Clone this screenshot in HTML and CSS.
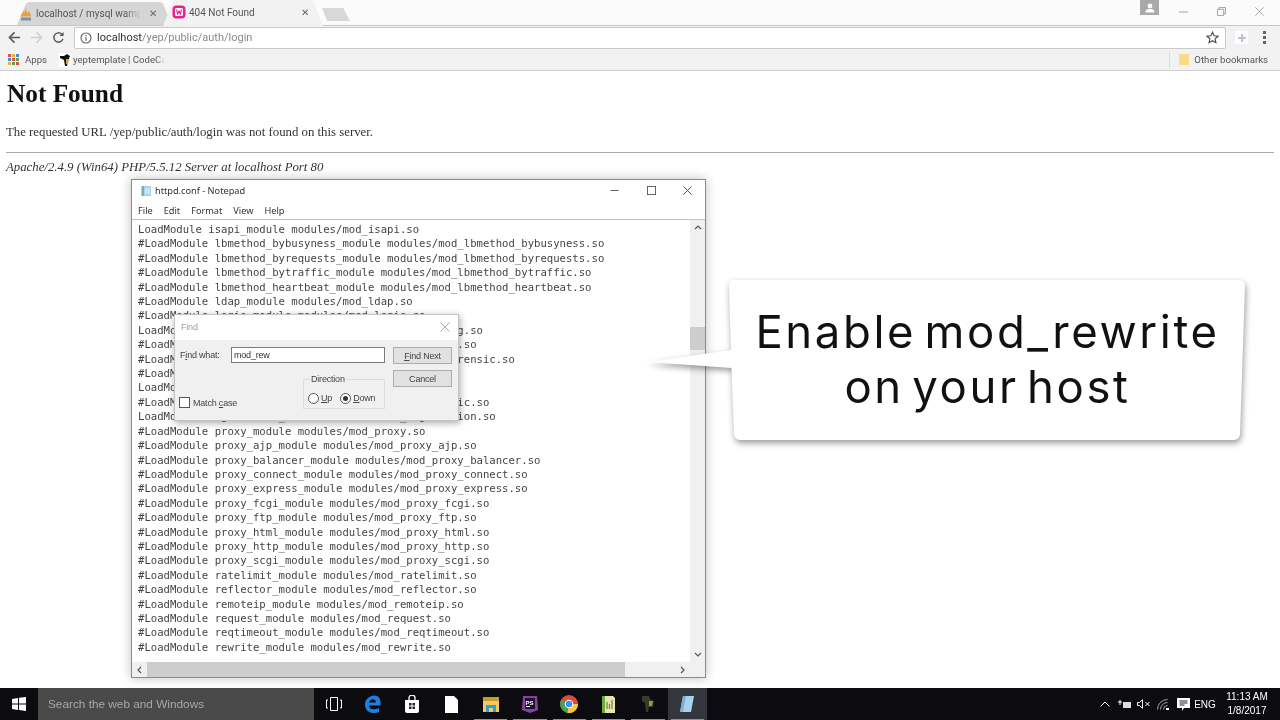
FILE: index.html
```html
<!DOCTYPE html>
<html lang="en">
<head>
<meta charset="utf-8">
<title>404 Not Found</title>
<link rel="stylesheet" href="styles.css">
</head>
<body>
<header class="chrome">
  <div class="tabstrip">
    <div class="tab tab-inactive">
      <svg class="fav" viewBox="0 0 14 14"><path d="M1 9 4 3l1 3 2-5 1 5 2-2 2 5z" fill="#e8a33c"/><path d="M1 9h11" stroke="#e8a33c"/><rect x="2" y="10.500" width="10" height="3" fill="#7c8fb5"/></svg>
      <span class="tab-title fade">localhost / mysql wamps</span>
      <span class="tab-x">✕</span>
    </div>
    <div class="tab tab-active">
      <svg class="fav" viewBox="0 0 14 14"><rect x=".5" y=".5" width="13" height="13" rx="4" fill="#e6228c"/><rect x="3" y="3" width="8" height="8" rx="1.5" fill="#fff"/><path d="M4.500 4.500 5.600 9 7 6l1.400 3 1.100-4.500" fill="none" stroke="#e6228c" stroke-width="1.100"/></svg>
      <span class="tab-title">404 Not Found</span>
      <span class="tab-x">✕</span>
    </div>
    <div class="tab-new"></div>
    <div class="winctl">
      <span class="profile"><svg viewBox="0 0 12 10" width="12" height="10"><circle cx="6" cy="3" r="2.400" fill="#fff"/><path d="M1.500 9.500c0-3 2-3.500 4.500-3.500s4.500.5 4.500 3.500z" fill="#fff"/></svg></span>
      <svg class="ctl ctl-min" viewBox="0 0 10 10"><path d="M0 5.500h10" stroke="#9a9a9a"/></svg>
      <svg class="ctl ctl-max" viewBox="0 0 10 10"><path d="M.5 2.500h7v7h-7zM2.500 2.500v-2h7v7h-2" fill="none" stroke="#9a9a9a"/></svg>
      <svg class="ctl ctl-close" viewBox="0 0 10 10"><path d="M.5.500l9 9M9.500.500l-9 9" stroke="#9a9a9a"/></svg>
    </div>
  </div>
  <div class="toolbar">
    <svg class="nav" viewBox="0 0 14 14"><path d="M13 7H2M7 1.500 1.500 7 7 12.500" fill="none" stroke="#5a5a5a" stroke-width="1.700"/></svg>
    <svg class="nav" viewBox="0 0 14 14"><path d="M1 7h11M7 1.500 12.500 7 7 12.500" fill="none" stroke="#cfcfcf" stroke-width="1.700"/></svg>
    <svg class="nav" viewBox="0 0 14 14"><path d="M11.800 8.500A5 5 0 1 1 10.500 3.400" fill="none" stroke="#5a5a5a" stroke-width="1.600"/><path d="M12.500 1v4.500H8z" fill="#5a5a5a"/></svg>
    <div class="omnibox">
      <svg class="info" viewBox="0 0 12 12"><circle cx="6" cy="6" r="5" fill="none" stroke="#5a5a5a" stroke-width="1.100"/><path d="M6 5.200v3.600M6 3v1.200" stroke="#5a5a5a" stroke-width="1.200"/></svg>
      <span class="url"><span class="host">localhost</span>/yep/public/auth/login</span>
      <svg class="star" viewBox="0 0 14 14"><path d="M7 1.300 8.700 5.200l4.300.4-3.200 2.800.9 4.200L7 10.400l-3.700 2.200.9-4.200L1 5.600l4.300-.4z" fill="none" stroke="#4a4a4a" stroke-width="1.200"/></svg>
    </div>
    <span class="ext"><svg viewBox="0 0 8 8" width="8" height="8"><path d="M4 0v8M0 4h8" stroke="#b9c4d2" stroke-width="2"/></svg></span>
    <span class="menu-dots"><i></i><i></i><i></i></span>
  </div>
  <div class="bookmarks">
    <svg class="apps" viewBox="0 0 11 11">
      <rect width="3" height="3" fill="#d9534a"/><rect x="4" width="3" height="3" fill="#e8b23a"/><rect x="8" width="3" height="3" fill="#4a86d8"/>
      <rect y="4" width="3" height="3" fill="#4a86d8"/><rect x="4" y="4" width="3" height="3" fill="#d9534a"/><rect x="8" y="4" width="3" height="3" fill="#58a55c"/>
      <rect y="8" width="3" height="3" fill="#e8b23a"/><rect x="4" y="8" width="3" height="3" fill="#58a55c"/><rect x="8" y="8" width="3" height="3" fill="#d9534a"/>
    </svg>
    <span class="bm-label">Apps</span>
    <svg class="bm-fav" viewBox="0 0 12 14"><path d="M0 0h12v14H0z" fill="#fff"/><path d="M1 3h4l3-2 3 2-2 5-1 5H6L5 7 1 5z" fill="#111"/><path d="M7 6h3l-1 5H7z" fill="#d9a441"/></svg>
    <span class="bm-label bm-fade">yeptemplate | CodeCa</span>
    <span class="bm-other">
      <svg class="folder" viewBox="0 0 10 11"><path d="M0 0h10v11H0z" fill="#fbdc83"/></svg>
      <span class="bm-label">Other bookmarks</span>
    </span>
  </div>
</header>

<main class="page">
  <h1>Not Found</h1>
  <p>The requested URL /yep/public/auth/login was not found on this server.</p>
  <hr>
  <address>Apache/2.4.9 (Win64) PHP/5.5.12 Server at localhost Port 80</address>
</main>

<section class="notepad">
  <div class="np-title">
    <svg class="np-icon" viewBox="0 0 12 12"><path d="M2 1h9v10H1V2z" fill="#a9d3ea"/><path d="M2 1h2v10H2z" fill="#7fa9bd"/><path d="M5 4h5M5 6h5M5 8h5" stroke="#e9f4fa"/></svg>
    <span>httpd.conf - Notepad</span>
    <span class="np-ctls">
      <svg class="np-ctl" viewBox="0 0 10 10"><path d="M.5 5h9" stroke="#555"/></svg>
      <svg class="np-ctl" viewBox="0 0 10 10"><rect x=".5" y=".5" width="9" height="9" fill="none" stroke="#555"/></svg>
      <svg class="np-ctl" viewBox="0 0 10 10"><path d="M.5.500l9 9M9.500.500l-9 9" stroke="#444"/></svg>
    </span>
  </div>
  <nav class="np-menu"><span>File</span><span>Edit</span><span>Format</span><span>View</span><span>Help</span></nav>
  <div class="np-body">
    <pre class="np-text">LoadModule isapi_module modules/mod_isapi.so
#LoadModule lbmethod_bybusyness_module modules/mod_lbmethod_bybusyness.so
#LoadModule lbmethod_byrequests_module modules/mod_lbmethod_byrequests.so
#LoadModule lbmethod_bytraffic_module modules/mod_lbmethod_bytraffic.so
#LoadModule lbmethod_heartbeat_module modules/mod_lbmethod_heartbeat.so
#LoadModule ldap_module modules/mod_ldap.so
#LoadModule logio_module modules/mod_logio.so
LoadModule log_config_module modules/mod_log_config.so
#LoadModule log_debug_module modules/mod_log_debug.so
#LoadModule log_forensic_module modules/mod_log_forensic.so
#LoadModule lua_module modules/mod_lua.so
LoadModule mime_module modules/mod_mime.so
#LoadModule mime_magic_module modules/mod_mime_magic.so
LoadModule negotiation_module modules/mod_negotiation.so
#LoadModule proxy_module modules/mod_proxy.so
#LoadModule proxy_ajp_module modules/mod_proxy_ajp.so
#LoadModule proxy_balancer_module modules/mod_proxy_balancer.so
#LoadModule proxy_connect_module modules/mod_proxy_connect.so
#LoadModule proxy_express_module modules/mod_proxy_express.so
#LoadModule proxy_fcgi_module modules/mod_proxy_fcgi.so
#LoadModule proxy_ftp_module modules/mod_proxy_ftp.so
#LoadModule proxy_html_module modules/mod_proxy_html.so
#LoadModule proxy_http_module modules/mod_proxy_http.so
#LoadModule proxy_scgi_module modules/mod_proxy_scgi.so
#LoadModule ratelimit_module modules/mod_ratelimit.so
#LoadModule reflector_module modules/mod_reflector.so
#LoadModule remoteip_module modules/mod_remoteip.so
#LoadModule request_module modules/mod_request.so
#LoadModule reqtimeout_module modules/mod_reqtimeout.so
#LoadModule rewrite_module modules/mod_rewrite.so</pre>
    <div class="vscroll">
      <svg class="arrow" viewBox="0 0 8 5"><path d="M1 4 4 1l3 3" fill="none" stroke="#555" stroke-width="1.200"/></svg>
      <div class="vtrack"><div class="vthumb"></div></div>
      <svg class="arrow" viewBox="0 0 8 5"><path d="M1 1l3 3 3-3" fill="none" stroke="#555" stroke-width="1.200"/></svg>
    </div>
  </div>
  <div class="hscroll">
    <svg class="arrow-h" viewBox="0 0 5 8"><path d="M4 1 1 4l3 3" fill="none" stroke="#555" stroke-width="1.200"/></svg>
    <div class="htrack"><div class="hthumb"></div></div>
    <svg class="arrow-h" viewBox="0 0 5 8"><path d="M1 1l3 3-3 3" fill="none" stroke="#555" stroke-width="1.200"/></svg>
    <span class="grip"></span>
  </div>

  <div class="find">
    <div class="find-title"><span>Find</span><svg class="find-x" viewBox="0 0 10 10"><path d="M.5.500l9 9M9.500.500l-9 9" stroke="#aaa"/></svg></div>
    <div class="find-body">
      <div class="find-left">
        <div class="find-row">
          <label class="find-label">F<u>i</u>nd what:</label>
          <div class="find-input">mod_rew</div>
        </div>
        <div class="find-opts">
          <div class="match"><span class="check"></span><span>Match <u>c</u>ase</span></div>
          <div class="direction">
            <span class="legend">Direction</span>
            <span class="radio"></span><span class="radio-lab"><u>U</u>p</span>
            <span class="radio on"></span><span class="radio-lab"><u>D</u>own</span>
          </div>
        </div>
      </div>
      <div class="find-btns">
        <div class="btn"><span><u>F</u>ind Next</span></div>
        <div class="btn">Cancel</div>
      </div>
    </div>
  </div>
</section>

<aside class="callout">
  <svg class="callout-shape" viewBox="0 0 620 180" width="620" height="180"><path d="M97 10H599a6 6 0 0 1 6 6L600 164a6 6 0 0 1-6 6H100a6 6 0 0 1-6-6L91.500 98 8 92 91 80 89 16a6 6 0 0 1 8-6z" fill="#fff"/></svg>
  <div class="callout-text">Enable mod_rewrite<br>on your host</div>
</aside>

<footer class="taskbar">
  <div class="start"><svg viewBox="0 0 14 14" width="14" height="14"><path d="M0 2l6-1v5.500H0zM7 .800 14 0v6.500H7zM0 7.500h6V13l-6-1zM7 7.500h7V14l-7-1z" fill="#fff"/></svg></div>
  <div class="search">Search the web and Windows</div>
  <div class="tb-icon"><svg viewBox="0 0 16 14" width="16" height="14"><path d="M4.500.500h7v13h-7zM2 3H.5v8H2M14 3h1.500v8H14" fill="none" stroke="#fff"/></svg></div>
  <div class="tb-icon"><svg viewBox="0 0 18 18" width="18" height="18"><path d="M16.500 10.500H5c.3 4 5.500 5 10 2.500v4c-6 2.500-14 .7-14-7.500C1 3 8-1 13 1c3 1.300 4 5 3.500 9.500zM12 7.500C12 3 6 3 5.200 7.500z" fill="#1e7fe0"/></svg></div>
  <div class="tb-icon"><svg viewBox="0 0 14 18" width="14" height="18"><path d="M0 5h14v11a2 2 0 0 1-2 2H2a2 2 0 0 1-2-2z" fill="#fff"/><path d="M4 5V3a3 3 0 0 1 6 0v2" fill="none" stroke="#fff" stroke-width="1.300"/><path d="M4 8h2.500v2.500H4zM7.500 8H10v2.500H7.500zM4 11.500h2.500V14H4zM7.500 11.500H10V14H7.500z" fill="#222"/></svg></div>
  <div class="tb-icon"><svg viewBox="0 0 13 17" width="13" height="17"><path d="M0 0h9l4 4v13H0z" fill="#fff"/></svg></div>
  <div class="tb-icon tb-run"><svg viewBox="0 0 16 16" width="16" height="16"><path d="M0 1h16v15H0z" fill="#f4c95d"/><path d="M0 1h16v4H0z" fill="#c99a2e"/><path d="M3 9h10v7H3z" fill="#2f9fd8"/><path d="M6 12h4v4H6z" fill="#f4c95d"/></svg></div>
  <div class="tb-icon tb-run"><svg viewBox="0 0 18 18" width="18" height="18"><path d="M2 1h14l1 14-8 3-8-3z" fill="#8a3fa8"/><path d="M4 3h10v11H4z" fill="#1a1027"/><text class="ps-mark" x="4.500" y="9.500">PS</text><path d="M5 11.500h4" stroke="#fff"/></svg></div>
  <div class="tb-icon tb-run"><svg viewBox="0 0 18 18" width="18" height="18"><circle cx="9" cy="9" r="9" fill="#dd4b3e"/><path d="M9 9 1.500 4.500 A9 9 0 0 0 7.500 17.900z" fill="#3aa757"/><path d="M9 9h9a9 9 0 0 1-10.500 8.900z" fill="#fcc934"/><circle cx="9" cy="9" r="4.300" fill="#fff"/><circle cx="9" cy="9" r="3.300" fill="#4a8af4"/></svg></div>
  <div class="tb-icon tb-run"><svg viewBox="0 0 15 18" width="15" height="18"><path d="M1 1h11l2 2v15H1z" fill="#e9e4b5"/><path d="M1 1h3v17H1z" fill="#6cae3c"/><path d="M6 14V7M8.500 14V9M11 14V5" stroke="#7a8a3a" stroke-width="1.300"/></svg></div>
  <div class="tb-icon tb-run"><svg viewBox="0 0 14 18" width="14" height="18"><path d="M1 1h7l2 4 3 1-1 6H8l-1 5H5L4 8 1 6z" fill="#3a3a2c"/><path d="M8 6h4l-1 5H8z" fill="#9a9a3c"/></svg></div>
  <div class="tb-icon tb-run tb-active"><svg viewBox="0 0 16 18" width="16" height="18"><path d="M4 1h11l-3 16H1z" fill="#a9d3ea"/><path d="M4 1h3L4 17H1z" fill="#7fb0cc"/></svg></div>
  <div class="tray">
    <span class="tr"><svg viewBox="0 0 10 6" width="10" height="6"><path d="M.5 5.500 5 1l4.500 4.500" fill="none" stroke="#fff"/></svg></span>
    <span class="tr"><svg viewBox="0 0 14 9" width="14" height="9"><path d="M5 2h8v6H5z" fill="#ddd"/><path d="M0 2h4M2 0v5" stroke="#fff"/></svg></span>
    <span class="tr"><svg viewBox="0 0 14 10" width="14" height="10"><path d="M.5 3.500h2L5.500.7v8.600l-3-2.800h-2z" fill="none" stroke="#fff"/><path d="M8.500 3l4 4M12.500 3l-4 4" stroke="#fff"/></svg></span>
    <span class="tr"><svg viewBox="0 0 13 11" width="13" height="11"><path d="M.5 10.500a10 10 0 0 1 10-10M3.500 10.500a7 7 0 0 1 7-7M6.500 10.500a4 4 0 0 1 4-4" fill="none" stroke="#aaa"/><path d="M9 9h3v2H9z" fill="#fff"/></svg></span>
    <span class="tr"><svg viewBox="0 0 13 13" width="13" height="13"><path d="M0 0h13v10H7l-2 3v-3H0z" fill="#fff"/><path d="M2.500 3h8M2.500 5h8M2.500 7h5" stroke="#222"/></svg></span>
    <span class="lang">ENG</span>
    <span class="clock"><span>11:13 AM</span><span>1/8/2017</span></span>
  </div>
</footer>
</body>
</html>
```
FILE: styles.css
```css
* { box-sizing: border-box; }
html, body { margin: 0; padding: 0; }
html { filter: blur(.3px); }
body {
  position: relative;
  width: 1280px;
  height: 720px;
  overflow: hidden;
  display: flex;
  flex-direction: column;
  background: #fff;
  font-family: Roboto, "Liberation Sans", sans-serif;
}

/* Browser chrome */
.chrome { flex: none; }
.tabstrip {
  height: 26px;
  display: flex;
  align-items: flex-end;
  padding-left: 17px;
  background: #fbfbfb;
  border-bottom: 1px solid #c6c6c6;
}
.tab {
  height: 24px;
  display: flex;
  align-items: center;
  font-size: 10px;
  color: #555;
  clip-path: polygon(0 100%, 6% 4%, 8% 0, 92% 0, 94% 4%, 100% 100%);
}
.tab-inactive {
  width: 155px;
  padding: 0 15px 0 2px;
  background: #d6d6d6;
  margin-right: -9px;
  height: 23px;
}
.tab-active {
  width: 160px;
  height: 26px;
  padding: 0 14px 2px 9px;
  background: #f2f2f2;
  margin-bottom: -1px;
  position: relative;
}
.fav { width: 14px; height: 14px; flex: none; margin-right: 3px; }
.tab-title { flex: 1; white-space: nowrap; overflow: hidden; }
.fade {
  -webkit-mask-image: linear-gradient(90deg, #000 85%, transparent);
  mask-image: linear-gradient(90deg, #000 85%, transparent);
}
.tab-x { font-size: 10px; color: #666; margin-left: 8px; }
.tab-new {
  width: 28px;
  height: 13px;
  margin: 0 0 4px -1px;
  background: #d8d8d8;
  clip-path: polygon(0 0, 76% 0, 100% 100%, 18% 100%);
}
.winctl { margin-left: auto; align-self: flex-start; display: flex; align-items: center; height: 15px; }
.profile {
  width: 19px; height: 15px; background: #a9a9a9;
  display: flex; justify-content: center; align-items: center;
  margin-right: 20px;
}
.ctl { width: 9px; height: 9px; margin-top: 7px; }
.ctl-min { margin-right: 29px; }
.ctl-max { margin-right: 29px; }
.ctl-close { margin-right: 16px; }

.toolbar {
  height: 23px;
  display: flex;
  align-items: center;
  background: #f2f2f2;
  padding-left: 8px;
}
.nav { width: 13px; height: 13px; flex: none; margin-right: 9px; }
.omnibox {
  width: 1152px;
  height: 22px;
  display: flex;
  align-items: center;
  padding: 0 6px 0 5px;
  background: #fff;
  border: 1px solid #c8c8c8;
  border-radius: 2px;
}
.info { width: 12px; height: 12px; margin-right: 5px; }
.url { flex: 1; font-size: 11px; color: #8a8a8a; }
.host { color: #333; }
.star { width: 13px; height: 13px; }
.ext {
  width: 13px; height: 13px; margin-left: 9px;
  display: flex; align-items: center; justify-content: center;
  background: #fdfdfd;
}
.menu-dots { display: flex; flex-direction: column; gap: 2px; margin-left: 15px; }
.menu-dots i { width: 3px; height: 3px; background: #666; display: block; }

.bookmarks {
  height: 22px;
  display: flex;
  align-items: center;
  padding: 0 12px 0 8px;
  background: #f2f2f2;
  border-bottom: 1px solid #cfcfcf;
  font-size: 9.600px;
  color: #555;
}
.apps { width: 11px; height: 11px; margin-right: 6px; }
.bm-fav { width: 12px; height: 14px; margin: 0 2px 0 12px; }
.bm-label { white-space: nowrap; }
.bm-fade {
  width: 92px; overflow: hidden;
  -webkit-mask-image: linear-gradient(90deg, #000 90%, transparent);
  mask-image: linear-gradient(90deg, #000 90%, transparent);
}
.bm-other {
  margin-left: auto;
  display: flex;
  align-items: center;
  height: 16px;
  padding-left: 9px;
  border-left: 1px solid #dcdcdc;
}
.folder { width: 10px; height: 11px; margin-right: 5px; }

/* Apache error page */
.page {
  flex: 1;
  padding: 0 6px;
  font-family: "Liberation Serif", serif;
  font-size: 12.800px;
  color: #333;
  min-height: 0;
}
.page h1 { margin: 9px 0 0 1px; font-size: 25.300px; line-height: 27px; color: #111; }
.page p { margin: 18px 0 0; line-height: 15px; }
.page hr { margin: 12px 0 0; border: 0; border-top: 1px solid #aaa; }
.page address { margin-top: 7px; line-height: 15px; }

/* Taskbar */
.taskbar {
  flex: none;
  height: 32px;
  display: flex;
  background: #0b0b10;
  color: #fff;
}
.start { width: 38px; display: flex; align-items: center; padding-left: 12px; }
.search {
  width: 276px;
  display: flex;
  align-items: center;
  padding-left: 10px;
  background: #4a4a4a;
  color: #a8a8a8;
  font-family: "Liberation Sans", sans-serif;
  font-size: 11.800px;
}
.tb-icon { position: relative; width: 39.300px; display: flex; align-items: center; justify-content: center; }
.tb-run::after { content: ""; position: absolute; left: 3px; right: 3px; bottom: 0; height: 1px; background: #5c9fd4; }
.tb-active { background: #33373d; }
.ps-mark { font: bold 6px "Liberation Sans", sans-serif; fill: #fff; }
.tray { margin-left: auto; display: flex; align-items: center; padding-right: 8px; }
.tr { width: 19.500px; display: flex; justify-content: center; }
.lang { width: 26px; text-align: center; font-size: 10px; margin-left: -1px; font-family: "Liberation Sans", sans-serif; }
.clock {
  width: 50px; margin-left: 4px;
  display: flex; flex-direction: column; align-items: center;
  font-family: "Liberation Sans", sans-serif; font-size: 10px; line-height: 14px;
}

/* Notepad window */
.notepad {
  position: absolute;
  left: 131px;
  top: 179px;
  width: 575px;
  height: 499px;
  display: flex;
  flex-direction: column;
  background: #fff;
  border: 1px solid #4f9ad6;
  box-shadow: 0 0 10px rgba(0,0,0,.25);
  font-family: "Noto Sans", "Liberation Sans", sans-serif;
  font-size: 9.200px;
  color: #333;
}
.np-title { height: 22px; display: flex; align-items: center; padding: 0 0 1px 8px; flex: none; }
.np-icon { width: 12px; height: 12px; margin-right: 3px; }
.np-ctls { margin-left: auto; display: flex; gap: 27.500px; padding-right: 13px; }
.np-ctl { width: 9px; height: 9px; display: block; }
.np-menu { height: 18px; display: flex; gap: 11px; align-items: center; padding-left: 6px; flex: none; border-bottom: 1px solid #a9c9e2; }
.np-body { flex: 1; display: flex; min-height: 0; }
.np-text {
  flex: 1;
  margin: 0;
  padding: 3px 0 0 6px;
  overflow: hidden;
  font-family: "DejaVu Sans Mono", "Liberation Mono", monospace;
  font-size: 10.620px;
  line-height: 14.410px;
  color: #444;
}
.vscroll { width: 15px; display: flex; flex-direction: column; background: #f0f0f0; flex: none; }
.arrow { width: 8px; height: 5px; margin: 5px auto; flex: none; }
.vtrack { flex: 1; padding-top: 92px; }
.vthumb { height: 23px; background: #cdcdcd; }
.hscroll { height: 15px; display: flex; align-items: center; background: #f0f0f0; flex: none; }
.arrow-h { width: 5px; height: 8px; margin: 0 5px; flex: none; }
.htrack { flex: 1; height: 100%; }
.hthumb { width: 478px; height: 100%; background: #cdcdcd; }
.grip { width: 15px; }

/* Find dialog */
.find {
  position: absolute;
  left: 42px;
  top: 134px;
  width: 285px;
  height: 107px;
  display: flex;
  flex-direction: column;
  background: #f0f0f0;
  border: 1px solid #c4c4c4;
  box-shadow: 1px 2px 7px rgba(0,0,0,.35);
  font-family: "Liberation Sans", sans-serif;
  font-size: 9px;
  letter-spacing: -.2px;
  color: #444;
}
.find-title {
  height: 25px; flex: none;
  display: flex; align-items: center; justify-content: space-between;
  padding: 0 8px 2px 6px;
  background: #fff; color: #a0a0a0;
}
.find-x { width: 10px; height: 10px; }
.find-body { flex: 1; display: flex; padding: 7px 6px 11px 4px; gap: 8px; }
.find-left { width: 206px; display: flex; flex-direction: column; justify-content: space-between; }
.find-row { display: flex; align-items: center; }
.find-label { width: 52px; padding-left: 1px; }
.find-input {
  flex: 1; height: 16px;
  padding-left: 2px;
  line-height: 15px;
  background: #fff;
  border: 1px solid #7a7a7a;
  color: #333;
}
.find-opts { display: flex; justify-content: space-between; align-items: flex-end; }
.match { display: flex; align-items: center; gap: 3px; margin-bottom: 1px; }
.check { width: 11px; height: 11px; background: #fff; border: 1px solid #555; }
.direction {
  position: relative;
  width: 82px; height: 30px;
  display: flex; align-items: center;
  padding: 8px 0 0 4px;
  border: 1px solid #dcdcdc;
}
.legend { position: absolute; left: 6px; top: -6px; padding: 0 1px; background: #f0f0f0; }
.radio { width: 11px; height: 11px; flex: none; border: 1px solid #555; border-radius: 50%; background: #fff; margin-right: 2px; position: relative; }
.radio.on::after { content: ""; position: absolute; inset: 2px; border-radius: 50%; background: #333; }
.radio-lab { margin-right: 8px; }
.find-btns { flex: 1; display: flex; flex-direction: column; gap: 6px; }
.btn {
  height: 17px;
  display: flex; align-items: center; justify-content: center;
  background: #e1e1e1;
  border: 1px solid #adadad;
}

/* Video annotation */
.callout {
  position: absolute;
  left: 640px;
  top: 270px;
  width: 620px;
  height: 180px;
  filter: drop-shadow(1px 3px 3px rgba(0,0,0,.4));
}
.callout-shape { position: absolute; left: 0; top: 0; display: block; }
.callout-text {
  position: absolute;
  left: 90px;
  top: 34px;
  width: 515px;
  text-align: center;
  font-family: Inter, Lato, sans-serif;
  font-size: 45.500px;
  letter-spacing: 2.600px;
  word-spacing: -7px;
  line-height: 55px;
  color: #111;
}
```
